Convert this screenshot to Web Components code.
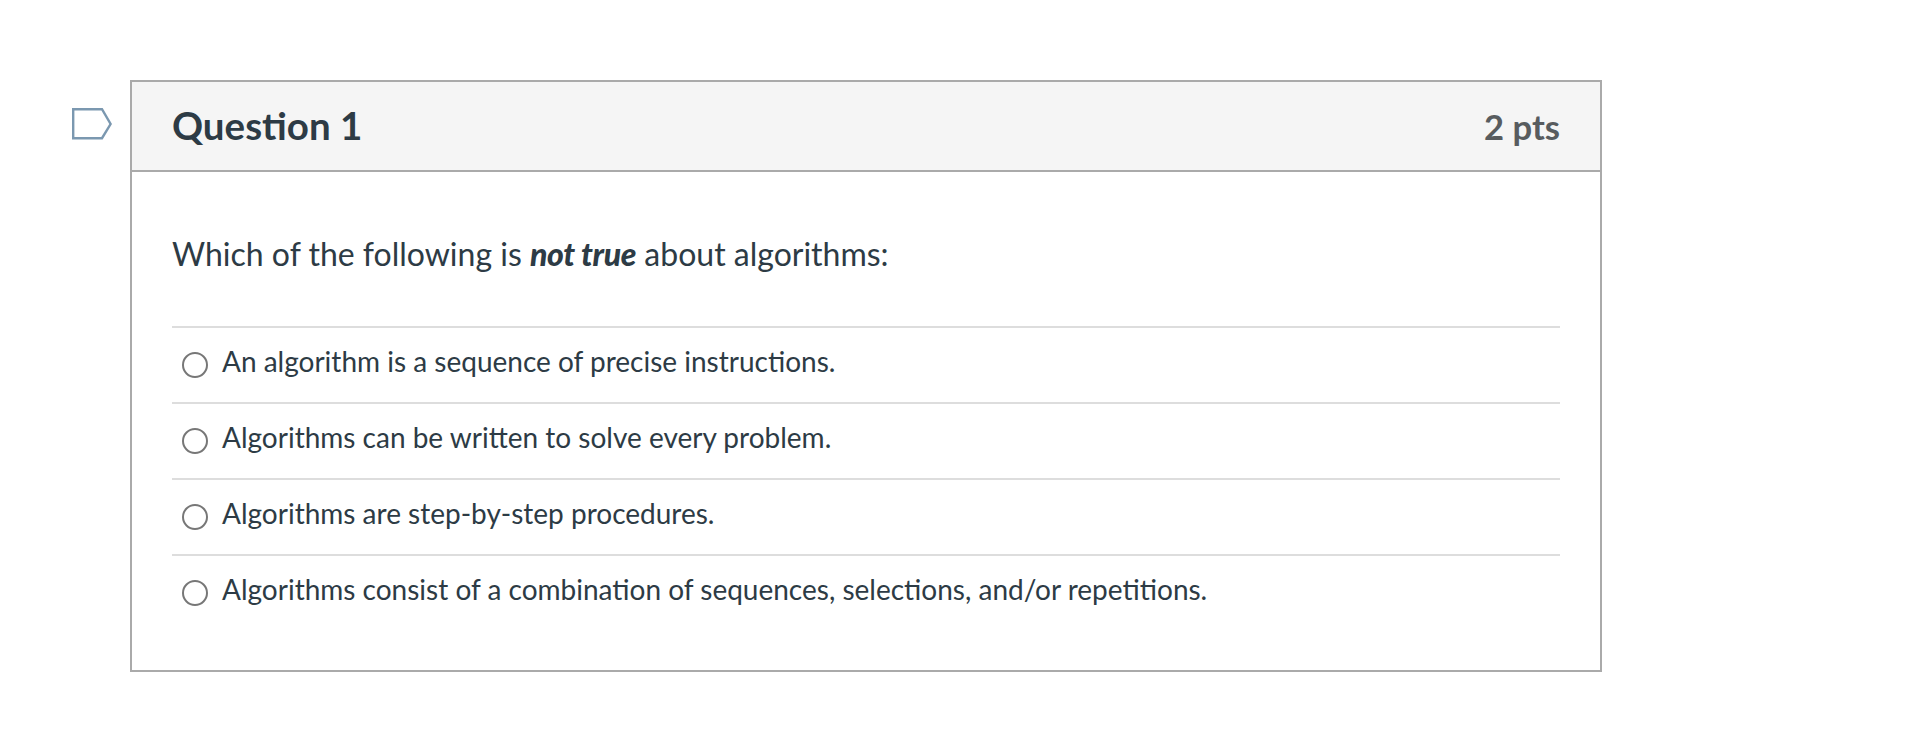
<!DOCTYPE html>
<html>
<head>
<meta charset="utf-8">
<title>Question 1</title>
<style>
  html, body { margin: 0; background: #fff; }
  body { font-family: Lato, "Open Sans", sans-serif; color: #2d3b45; }
  strong { font-weight: 900; letter-spacing: -0.35px; }
</style>
</head>
<body>
<quiz-page>
  <quiz-flag slot="flag"></quiz-flag>
  <quiz-question>
    <span slot="title">Question 1</span>
    <span slot="points">2 pts</span>
    <span slot="prompt">Which of the following is <strong><em>not true</em></strong> about algorithms:</span>
    <quiz-answer>An algorithm is a sequence of precise instructions.</quiz-answer>
    <quiz-answer>Algorithms can be written to solve every problem.</quiz-answer>
    <quiz-answer>Algorithms are step-by-step procedures.</quiz-answer>
    <quiz-answer>Algorithms consist of a combination of sequences, selections, and/or repetitions.</quiz-answer>
  </quiz-question>
</quiz-page>
<script>
class QuizPage extends HTMLElement {
  connectedCallback() {
    this.attachShadow({ mode: 'open' });
    this.shadowRoot.innerHTML = `
      <style>
        :host { display: flex; padding: 80px 310px 0 0; }
        .gutter { flex: 0 0 130px; display: flex; justify-content: flex-end; padding: 28px 18px 0 0; box-sizing: border-box; }
        .main { flex: 1; min-width: 0; }
      </style>
      <div class="gutter"><slot name="flag"></slot></div>
      <div class="main"><slot></slot></div>
    `;
  }
}
customElements.define('quiz-page', QuizPage);

class QuizFlag extends HTMLElement {
  connectedCallback() {
    this.attachShadow({ mode: 'open' });
    this.shadowRoot.innerHTML = `
      <style>
        :host { display: block; width: 40px; height: 32px; }
        svg { display: block; }
      </style>
      <svg width="40" height="32" viewBox="0 0 40 32">
        <path d="M1.2 1.2H30L38.6 16 30 30.2H1.2Z" fill="#fff" stroke="#7b98b0" stroke-width="2.4"/>
      </svg>
    `;
  }
}
customElements.define('quiz-flag', QuizFlag);

class QuizQuestion extends HTMLElement {
  connectedCallback() {
    this.attachShadow({ mode: 'open' });
    this.shadowRoot.innerHTML = `
      <style>
        :host { display: block; border: 2px solid #aaa; height: 592px; box-sizing: border-box; }
        header {
          display: flex;
          justify-content: space-between;
          align-items: center;
          height: 90px;
          box-sizing: border-box;
          padding: 0 40px;
          background: #f5f5f5;
          border-bottom: 2px solid #aaa;
        }
        .title { font-size: 38.5px; font-weight: 700; color: #2d3b45; margin-top: -2px; }
        .points { font-size: 34.6px; font-weight: 700; color: #585c5f; }
        .body { padding: 59px 40px 0; }
        .prompt { font-size: 32px; line-height: 46px; height: 95px; color: #2d3b45; }
      </style>
      <header>
        <span class="title"><slot name="title"></slot></span>
        <span class="points"><slot name="points"></slot></span>
      </header>
      <div class="body">
        <div class="prompt"><slot name="prompt"></slot></div>
        <slot></slot>
      </div>
    `;
  }
}
customElements.define('quiz-question', QuizQuestion);

class QuizAnswer extends HTMLElement {
  connectedCallback() {
    this.attachShadow({ mode: 'open' });
    this.shadowRoot.innerHTML = `
      <style>
        :host {
          display: flex;
          align-items: center;
          height: 76px;
          box-sizing: border-box;
          border-top: 2px solid #ddd;
          padding-left: 10px;
          font-size: 28px;
          color: #2d3b45;
        }
        .radio {
          flex: none;
          width: 26px;
          height: 26px;
          box-sizing: border-box;
          border: 2px solid #777;
          border-radius: 50%;
          margin-right: 14px;
        }
        .text { margin-top: -8px; }
      </style>
      <span class="radio"></span>
      <span class="text"><slot></slot></span>
    `;
  }
}
customElements.define('quiz-answer', QuizAnswer);
</script>
</body>
</html>
